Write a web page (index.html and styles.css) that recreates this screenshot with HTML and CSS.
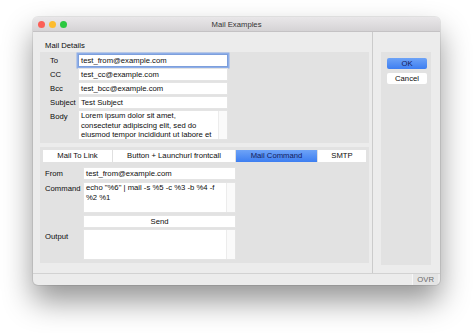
FILE: index.html
```html
<!DOCTYPE html>
<html lang="en">
<head>
  <meta charset="UTF-8" />
  <title>Mail Examples</title>
  <link rel="stylesheet" href="styles.css">
</head>
<body>

<div class="window">
  <div class="titlebar">
    <div class="lights">
      <span class="light red"></span>
      <span class="light yellow"></span>
      <span class="light green"></span>
    </div>
    <div class="title">Mail Examples</div>
  </div>

  <div class="main">
    <div class="left">
      <div class="group-label">Mail Details</div>
      <div class="group">
        <div class="row"><div class="label">To</div><div class="field focus">test_from@example.com</div></div>
        <div class="row"><div class="label">CC</div><div class="field">test_cc@example.com</div></div>
        <div class="row"><div class="label">Bcc</div><div class="field">test_bcc@example.com</div></div>
        <div class="row"><div class="label">Subject</div><div class="field">Test Subject</div></div>
        <div class="row">
          <div class="label">Body</div>
          <div class="area">
            <div class="area-text">Lorem ipsum dolor sit amet,<br>consectetur adipiscing elit, sed do<br>eiusmod tempor incididunt ut labore et</div>
            <div class="scroll"></div>
          </div>
        </div>
      </div>

      <div class="tabs">
        <div class="tabbar">
          <div class="tab t1">Mail To Link</div>
          <div class="tab t2">Button + Launchurl frontcall</div>
          <div class="tab t3 selected">Mail Command</div>
          <div class="tab t4">SMTP</div>
        </div>
        <div class="page">
          <div class="prow"><div class="plabel">From</div><div class="field wide">test_from@example.com</div></div>
          <div class="prow">
            <div class="plabel">Command</div>
            <div class="area wide tall">
              <div class="area-text">echo "%6" | mail -s %5 -c %3 -b %4 -f<br>%2 %1</div>
              <div class="scroll"></div>
            </div>
          </div>
          <div class="prow send-row"><div class="plabel"></div><div class="button wide">Send</div></div>
          <div class="prow">
            <div class="plabel out">Output</div>
            <div class="area wide tall">
              <div class="area-text"></div>
              <div class="scroll"></div>
            </div>
          </div>
        </div>
      </div>
    </div>

    <div class="right">
      <div class="btnbox">
        <div class="btn ok">OK</div>
        <div class="btn">Cancel</div>
      </div>
    </div>
  </div>

  <div class="status"><span class="ovr">OVR</span></div>
</div>

</body>
</html>
```

FILE: styles.css
```css
body {
  margin: 0;
  width: 474px;
  height: 333px;
  background: #ffffff;
  font-family: "Liberation Sans", Arial, sans-serif;
  font-size: 7.7px;
  color: #0c0c0c;
  overflow: hidden;
}

.window {
  margin: 17px 0 0 33px;
  width: 407px;
  height: 268px;
  background: #ececec;
  border-radius: 5px;
  box-shadow: 0 16px 30px rgba(0, 0, 0, 0.42), 0 0 0 1px rgba(0, 0, 0, 0.08);
  display: flex;
  flex-direction: column;
  overflow: hidden;
}

/* Title bar */
.titlebar {
  height: 15px;
  flex: none;
  display: flex;
  align-items: center;
  position: relative;
  background: linear-gradient(#e9e7e9, #d5d3d5);
  border-bottom: 1px solid #c4c2c4;
  box-sizing: border-box;
}

.lights {
  display: flex;
  gap: 4px;
  padding-left: 5px;
}

.light {
  width: 7px;
  height: 7px;
  border-radius: 50%;
}

.red { background: #fc5f57; }
.yellow { background: #fdbc2e; }
.green { background: #2bc840; }

.title {
  position: absolute;
  left: 0;
  right: 0;
  text-align: center;
  color: #333;
}

/* Main area */
.main {
  height: 241px;
  flex: none;
  display: flex;
}

.left {
  width: 338px;
  padding: 9px 3px 0 7px;
  border-right: 1px solid #cbcbcb;
}

.group-label {
  line-height: 10px;
  padding-left: 5px;
  margin-bottom: 1px;
}

.group {
  height: 91px;
  box-sizing: border-box;
  background: #e2e2e2;
  padding: 2px 0 0 10px;
}

.row {
  display: flex;
  margin-bottom: 1px;
}

.label {
  width: 28px;
  line-height: 13px;
}

.field {
  width: 150px;
  height: 13px;
  line-height: 12px;
  box-sizing: border-box;
  background: #fff;
  border: 1px solid #e4e4e4;
  padding-left: 2px;
  white-space: nowrap;
}

.field.focus {
  box-shadow: 0 0 0 1.5px #8eaee8;
  border-color: #7d9fdc;
}

.area {
  width: 150px;
  height: 30px;
  box-sizing: border-box;
  background: #fff;
  border: 1px solid #e4e4e4;
  display: flex;
}

.area-text {
  flex: 1;
  padding: 0 0 0 2px;
  line-height: 9.5px;
  white-space: nowrap;
  overflow: hidden;
}

.scroll {
  width: 8px;
  border-left: 1px solid #ececec;
  background: #fafafa;
}

/* Tabs */
.tabs {
  margin-top: 4px;
  height: 116px;
  box-sizing: border-box;
  background: #e2e2e2;
  padding: 3px 3px 3px 0;
}

.tabbar {
  display: flex;
  margin-left: 3px;
  height: 12px;
}

.tab {
  box-sizing: border-box;
  background: #fff;
  text-align: center;
  line-height: 12px;
  border-right: 1px solid #e0e0e0;
}

.t1 { width: 70px; }
.t2 { width: 123px; }
.t3 { width: 82px; }
.t4 { width: 48px; border-right: none; }

.tab.selected {
  background: linear-gradient(#6ea3f7, #3d7ef1);
  color: #14205a;
}

.page {
  padding: 5px 0 0 5px;
}

.prow {
  display: flex;
  margin-bottom: 2px;
}

.send-row {
  margin-bottom: 1px;
}

.plabel {
  width: 38px;
  line-height: 13px;
}

.plabel.out {
  padding-top: 1px;
}

.wide {
  width: 153px;
}

.tall {
  height: 31px;
}

.button {
  height: 13px;
  line-height: 12px;
  text-align: center;
  background: #fff;
  border: 1px solid #e4e4e4;
  box-sizing: border-box;
}

/* Right panel */
.right {
  width: 68px;
  box-sizing: border-box;
  padding: 20px 10px 8px 8px;
}

.btnbox {
  height: 100%;
  background: #e2e2e2;
  padding: 6px 4px 0 6px;
  box-sizing: border-box;
}

.btn {
  width: 40px;
  height: 11px;
  line-height: 11px;
  text-align: center;
  background: #fff;
  border-radius: 2px;
  margin-bottom: 4px;
}

.btn.ok {
  background: linear-gradient(#6ea3f7, #3d7ef1);
  color: #14205a;
}

/* Status bar */
.status {
  flex: 1;
  border-top: 1px solid #d2d2d2;
  display: flex;
  justify-content: flex-end;
  align-items: stretch;
}

.ovr {
  margin-right: 2px;
  padding: 0 4px;
  line-height: 11px;
  color: #6a6a6a;
  background: #e4e4e4;
  border-left: 1px solid #f6f6f6;
}
```
